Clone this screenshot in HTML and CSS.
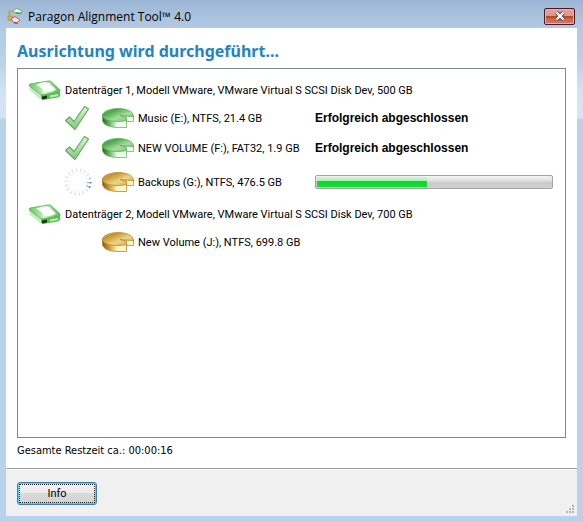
FILE: index.html
```html
<!DOCTYPE html>
<html lang="de">
<head>
    <meta charset="UTF-8">
    <meta name="viewport" content="width=device-width, initial-scale=1.0">
    <title>Paragon Alignment Tool™ 4.0</title>
    <link rel="stylesheet" href="styles.css">
</head>
<body>
    <!-- Shared icons -->
    <svg class="icon-defs" width="0" height="0" aria-hidden="true">
        <defs>
            <linearGradient id="green-top" x1="0" y1="0" x2="1" y2="1">
                <stop offset="0" stop-color="#8fd388"/>
                <stop offset="0.25" stop-color="#4ca546"/>
                <stop offset="0.6" stop-color="#a4dd9c"/>
                <stop offset="1" stop-color="#6dbd65"/>
            </linearGradient>
            <linearGradient id="green-side">
                <stop offset="0" stop-color="#246822"/>
                <stop offset="0.25" stop-color="#58ac4e"/>
                <stop offset="0.6" stop-color="#e9fae5"/>
                <stop offset="1" stop-color="#f4fff1"/>
            </linearGradient>
            <linearGradient id="gold-top" x1="0" y1="0" x2="1" y2="1">
                <stop offset="0" stop-color="#e3c067"/>
                <stop offset="0.25" stop-color="#c4942c"/>
                <stop offset="0.6" stop-color="#edd488"/>
                <stop offset="1" stop-color="#cfa23c"/>
            </linearGradient>
            <linearGradient id="gold-side">
                <stop offset="0" stop-color="#8a5d0c"/>
                <stop offset="0.25" stop-color="#c3922c"/>
                <stop offset="0.6" stop-color="#fff2b4"/>
                <stop offset="1" stop-color="#fff9d8"/>
            </linearGradient>
            <linearGradient id="check-fill" x1="0" y1="0" x2="0" y2="1">
                <stop offset="0" stop-color="#dcf5d7"/>
                <stop offset="1" stop-color="#7ccb76"/>
            </linearGradient>
            <linearGradient id="disk-top">
                <stop offset="0" stop-color="#6cc466"/>
                <stop offset="0.5" stop-color="#c5f0bf"/>
                <stop offset="1" stop-color="#5cb857"/>
            </linearGradient>
            <symbol id="disk" viewBox="0 0 34 20">
                <path d="M1 5 13 14V20L2 10.500Q1 9 1 5Z" fill="#c4edbf"/>
                <path d="M13 14 32 11V15.500Q32 17 30 17.500L15 20Q13 20 13 17Z" fill="#5dc056"/>
                <path d="M2 4 20 1Q22 0.600 23 1.500L32 10Q32.500 11.500 31 12L15 15Q13 15 12 14L1.500 6Q0.500 5 2 4Z" fill="url(#disk-top)" stroke="#58b052" stroke-width="0.800"/>
                <path d="M8 5Q16 1.500 21 3L28 9.500Q24 12.500 15 12.500Q16 8 8 5Z" fill="#fff"/>
                <path d="M14 16.500 19 15.500V18.500L14 19.500Z" fill="#153a13"/>
                <path d="M22 16.500 30 15" stroke="#b8edb1" stroke-width="2"/>
            </symbol>
            <symbol id="check" viewBox="0 0 26 26">
                <path d="M1.500 15.500 5.500 12 10 16.500 20.500 1.500 24.500 4 11 24.500Z" fill="url(#check-fill)" stroke="#69a565" stroke-width="1.200" stroke-linejoin="round"/>
            </symbol>
            <symbol id="volume-green" viewBox="0 0 32 20">
                <path d="M0.500 7V12.500C1 17 8 19.500 16 19.500H24.500V12Z" fill="url(#green-side)" stroke="#5fab58" stroke-width="0.700"/>
                <path d="M22 8H31.500V13.500H25Z" fill="#f1fdee" stroke="#5fab58" stroke-width="0.700"/>
                <path d="M31.500 8.500C31.500 3 24 0.500 16 0.500S0.500 3.500 0.500 7.500 8 13.500 16 13.500Q21 13.500 24.500 12.500V9.500L18 7.500Z" fill="url(#green-top)" stroke="#5aa652" stroke-width="0.700"/>
            </symbol>
            <symbol id="volume-gold" viewBox="0 0 32 20">
                <path d="M0.500 7V12.500C1 17 8 19.500 16 19.500H24.500V12Z" fill="url(#gold-side)" stroke="#aa7c20" stroke-width="0.700"/>
                <path d="M22 8H31.500V13.500H25Z" fill="#fdf3c4" stroke="#b58426" stroke-width="0.700"/>
                <path d="M31.500 8.500C31.500 3 24 0.500 16 0.500S0.500 3.500 0.500 7.500 8 13.500 16 13.500Q21 13.500 24.500 12.500V9.500L18 7.500Z" fill="url(#gold-top)" stroke="#b38425" stroke-width="0.700"/>
            </symbol>
        </defs>
    </svg>

    <div class="window">
        <header class="title-bar">
            <svg class="app-icon" viewBox="0 0 16 16" aria-hidden="true">
                <path d="M4 3Q1 4 3 7M3 7Q0 9 2 12L5 12M3 8 6 10" fill="none" stroke="#c9a040" stroke-width="2"/>
                <path d="M5 3 10 0.500 15 3 14 6 10 5Z" fill="#f4fff1" stroke="#65b85a"/>
                <path d="M9 5H14" stroke="#2c8b27"/>
                <path d="M4 11 8 8.500 13 12 10 15 6 14Z" fill="#fae4dc" stroke="#c56046"/>
                <path d="M7 15H11" stroke="#9c3120"/>
            </svg>
            <span class="title">Paragon Alignment Tool™ 4.0</span>
            <button class="close" type="button" aria-label="Schließen">
                <svg viewBox="0 0 12 10" aria-hidden="true">
                    <path d="M2.500 1.500 9.500 8.500M9.500 1.500 2.500 8.500" stroke="#4c4864" stroke-width="4"/>
                    <path d="M2.500 1.500 9.500 8.500M9.500 1.500 2.500 8.500" stroke="#fff" stroke-width="2.200"/>
                </svg>
            </button>
        </header>

        <main class="client">
            <h1>Ausrichtung wird durchgeführt...</h1>

            <div class="disk-list">
                <div class="disk">
                    <svg class="disk-icon" aria-hidden="true"><use href="#disk"/></svg>
                    <span>Datenträger 1, Modell VMware, VMware Virtual S SCSI Disk Dev, 500 GB</span>
                </div>
                <div class="volume">
                    <svg class="state-icon" aria-hidden="true"><use href="#check"/></svg>
                    <svg class="volume-icon" aria-hidden="true"><use href="#volume-green"/></svg>
                    <span>Music (E:), NTFS, 21.4 GB</span>
                    <strong>Erfolgreich abgeschlossen</strong>
                </div>
                <div class="volume">
                    <svg class="state-icon" aria-hidden="true"><use href="#check"/></svg>
                    <svg class="volume-icon" aria-hidden="true"><use href="#volume-green"/></svg>
                    <span>NEW VOLUME (F:), FAT32, 1.9 GB</span>
                    <strong>Erfolgreich abgeschlossen</strong>
                </div>
                <div class="volume active">
                    <svg class="spinner" viewBox="0 0 28 28" aria-hidden="true">
                        <g fill="none" stroke-width="2">
                            <circle cx="14" cy="14" r="12.500" pathLength="54" stroke="#dcdcdc" stroke-dasharray="1 2"/>
                            <circle cx="14" cy="14" r="10" pathLength="54" stroke="#ececec" stroke-dasharray="1 2"/>
                            <circle cx="14" cy="14" r="12.500" pathLength="54" stroke="#3d82c4" stroke-dasharray="1 2 1 50"/>
                            <circle cx="14" cy="14" r="10" pathLength="54" stroke="#8db9e0" stroke-dasharray="1 2 1 50"/>
                            <circle cx="14" cy="14" r="12.500" pathLength="54" stroke="#a9cae8" stroke-dasharray="0 51 1 2"/>
                        </g>
                    </svg>
                    <svg class="volume-icon" aria-hidden="true"><use href="#volume-gold"/></svg>
                    <label for="progress-g">Backups (G:), NTFS, 476.5 GB</label>
                    <progress id="progress-g" value="47" max="100"></progress>
                </div>
                <div class="disk">
                    <svg class="disk-icon" aria-hidden="true"><use href="#disk"/></svg>
                    <span>Datenträger 2, Modell VMware, VMware Virtual S SCSI Disk Dev, 700 GB</span>
                </div>
                <div class="volume">
                    <span></span>
                    <svg class="volume-icon" aria-hidden="true"><use href="#volume-gold"/></svg>
                    <span>New Volume (J:), NTFS, 699.8 GB</span>
                </div>
            </div>

            <p class="time-left">Gesamte Restzeit ca.: 00:00:16</p>
        </main>

        <footer class="buttons">
            <button class="info" type="button">Info</button>
            <svg class="grip" viewBox="0 0 9 9" aria-hidden="true">
                <path d="M7 1h2M4 4h2M7 4h2M1 7h2M4 7h2M7 7h2" stroke="#b5b5b5" stroke-width="2"/>
            </svg>
        </footer>
    </div>
</body>
</html>
```
FILE: styles.css
```css
* {
    box-sizing: border-box;
}

body {
    margin: 0;
    font-family: Roboto, "Liberation Sans", Arial, sans-serif;
    font-size: 11px;
    color: #000;
}

.icon-defs {
    position: absolute;
}

.window {
    display: flex;
    flex-direction: column;
    min-height: 100vh;
    padding: 0 6px 6px;
    background: linear-gradient(#9bb6d4 0, #b2cae4 28px, #b9d1ea 60px, #d2e2f4 90px, #d6e5f5 118px, #b9d1ea 119px);
}

/* Title bar */
.title-bar {
    display: flex;
    align-items: center;
    height: 28px;
    padding: 4px 2px 0 1px;
}

.app-icon {
    width: 16px;
    height: 16px;
    margin-right: 5px;
}

.title {
    flex: 1;
    font-family: "Open Sans", "Noto Sans", sans-serif;
    font-size: 12px;
}

.close {
    display: flex;
    align-items: center;
    justify-content: center;
    width: 31px;
    height: 17px;
    padding: 0;
    border: 1px solid #421a2c;
    border-radius: 2px;
    background: linear-gradient(#e8a398 0, #e09488 47%, #b4510f 48%, #b4510f 60%, #c9604f 61%, #d4796a 100%);
    box-shadow: inset 0 0 0 1px #eab0a6;
}

.close svg {
    width: 12px;
    height: 10px;
}

/* Content */
.client {
    flex: 1;
    display: flex;
    flex-direction: column;
    padding: 11px 11px 0;
    background: #fff;
}

h1 {
    margin: 0 0 5px;
    font-family: "Noto Sans", "Open Sans", sans-serif;
    font-size: 16px;
    line-height: 24px;
    color: #2583c3;
}

.disk-list {
    flex: 1;
    padding: 8px 12px 8px 10px;
    border: 1px solid #828790;
}

.disk {
    display: flex;
    align-items: center;
    gap: 3px;
    height: 26px;
}

.disk-icon {
    width: 34px;
    height: 20px;
}

.volume {
    display: grid;
    grid-template-columns: 34px 32px 173px 1fr;
    column-gap: 4px;
    align-items: center;
    height: 30px;
    padding-left: 36px;
}

.volume.active {
    height: 38px;
}

.state-icon {
    width: 26px;
    height: 26px;
}

.spinner {
    width: 28px;
    height: 28px;
}

.volume-icon {
    width: 32px;
    height: 20px;
}

.disk span,
.volume span,
.volume label,
.volume strong {
    white-space: nowrap;
}

.volume strong {
    font-family: "Liberation Sans", Arial, sans-serif;
    font-size: 12px;
}

progress {
    appearance: none;
    width: 100%;
    height: 14px;
    padding: 1px;
    border: 1px solid #a3a3a3;
    border-radius: 2px;
    background: linear-gradient(#f5f5f5, #dcdcdc 45%, #c9c9c9 50%, #d2d2d2);
}

progress::-webkit-progress-bar {
    background: transparent;
}

progress::-webkit-progress-value {
    background: linear-gradient(#d0f5d0 0, #aaf0ae 40%, #0bd730 41%, #13de35 100%);
}

.time-left {
    margin: 0;
    padding: 6px 0 10px;
    font-family: "DejaVu Sans Condensed", "DejaVu Sans", sans-serif;
    font-size: 11px;
    line-height: 14px;
}

/* Bottom bar */
.buttons {
    display: flex;
    justify-content: space-between;
    align-items: flex-end;
    height: 48px;
    padding: 0 3px 2px 11px;
    border-top: 1px solid #a0a0a0;
    background: #f0f0f0;
    box-shadow: inset 0 1px #fff;
}

.info {
    width: 80px;
    height: 23px;
    margin-bottom: 9px;
    padding: 0;
    border: 1px solid #3c7fb1;
    border-radius: 3px;
    background: linear-gradient(#f2f2f2, #ebebeb 49%, #dadada 50%, #d2d2d2);
    box-shadow: inset 0 0 0 1px #4fd2f7;
    font-family: inherit;
    font-size: 11px;
    outline: 1px dotted #222;
    outline-offset: -3px;
}

.grip {
    width: 9px;
    height: 9px;
}
```
